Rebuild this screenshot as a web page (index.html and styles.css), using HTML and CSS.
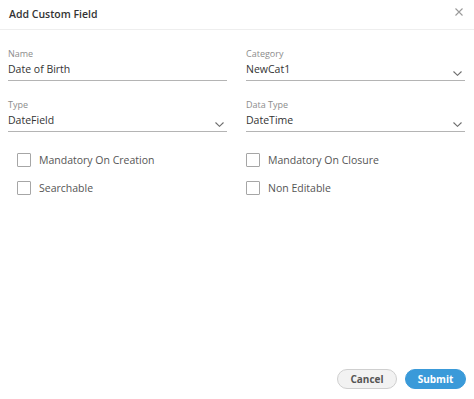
FILE: index.html
```html
<!DOCTYPE html>
<html>
<head>
<meta charset="utf-8">
<link rel="stylesheet" href="styles.css">
</head>
<body>
<div class="dialog">
  <div class="header">
    <div class="title">Add Custom Field</div>
    <svg class="close" width="8" height="8" viewBox="0 0 8 8"><path d="M0.5 0.5L7.5 7.5M7.5 0.5L0.5 7.5" stroke="#9a9a9a" stroke-width="1.1" fill="none"/></svg>
  </div>
  <div class="body">
    <div class="grid">
      <div class="field">
        <div class="label">Name</div>
        <div class="input"><span>Date of Birth</span></div>
      </div>
      <div class="field">
        <div class="label">Category</div>
        <div class="input"><span>NewCat1</span><svg class="chev" width="9" height="5" viewBox="0 0 9 5"><path d="M0.5 0.5L4.5 4.3L8.5 0.5" stroke="#6d6d6d" stroke-width="1.1" fill="none"/></svg></div>
      </div>
      <div class="field">
        <div class="label">Type</div>
        <div class="input"><span>DateField</span><svg class="chev" width="9" height="5" viewBox="0 0 9 5"><path d="M0.5 0.5L4.5 4.3L8.5 0.5" stroke="#6d6d6d" stroke-width="1.1" fill="none"/></svg></div>
      </div>
      <div class="field">
        <div class="label">Data Type</div>
        <div class="input"><span>DateTime</span><svg class="chev" width="9" height="5" viewBox="0 0 9 5"><path d="M0.5 0.5L4.5 4.3L8.5 0.5" stroke="#6d6d6d" stroke-width="1.1" fill="none"/></svg></div>
      </div>
    </div>
    <div class="checks">
      <label class="check"><span class="box"></span>Mandatory On Creation</label>
      <label class="check"><span class="box"></span>Mandatory On Closure</label>
      <label class="check"><span class="box"></span>Searchable</label>
      <label class="check"><span class="box"></span>Non Editable</label>
    </div>
  </div>
  <div class="footer">
    <button class="btn cancel">Cancel</button>
    <button class="btn submit">Submit</button>
  </div>
</div>
</body>
</html>
```
FILE: styles.css
```css
html, body {
  margin: 0;
  padding: 0;
  background: #ffffff;
}
body {
  font-family: "Open Sans", "Liberation Sans", sans-serif;
  color: #333333;
}
.dialog {
  width: 474px;
  height: 399px;
  display: flex;
  flex-direction: column;
  box-sizing: border-box;
}
.header {
  height: 30px;
  border-bottom: 1px solid #eeeeee;
  display: flex;
  align-items: center;
  justify-content: space-between;
  padding: 0 11px 2px 9px;
  box-sizing: border-box;
}
.title {
  font-size: 10.5px;
  font-weight: 600;
  color: #333333;
}
.close {
  display: block;
  margin-top: -4px;
}
.body {
  flex: 1;
  padding: 18px 9px 0 8px;
}
.grid {
  display: grid;
  grid-template-columns: 219px 219px;
  column-gap: 19px;
  row-gap: 18px;
}
.label {
  font-size: 9px;
  line-height: 11px;
  color: #8c8c8c;
}
.input {
  height: 22px;
  border-bottom: 1px solid #b4b4b4;
  display: flex;
  align-items: center;
  justify-content: space-between;
  font-size: 10.5px;
  color: #333333;
  box-sizing: border-box;
}
.input span {
  line-height: 15px;
}
.chev {
  display: block;
  margin-right: 3px;
  margin-top: 7px;
}
.checks {
  display: grid;
  grid-template-columns: 229px 200px;
  row-gap: 13px;
  margin-top: 20px;
  padding-left: 9px;
}
.check {
  display: flex;
  align-items: center;
  font-size: 10.5px;
  color: #555555;
  height: 15px;
}
.box {
  width: 12px;
  height: 12px;
  border: 1px solid #a6a6a6;
  border-radius: 1px;
  margin-right: 8px;
  flex: none;
}
.footer {
  display: flex;
  justify-content: flex-end;
  gap: 8px;
  padding: 0 8px 10px 0;
}
.btn {
  height: 20px;
  border-radius: 10px;
  font-family: "Open Sans", "Liberation Sans", sans-serif;
  font-size: 10px;
  font-weight: 700;
  padding: 0;
  cursor: pointer;
}
.cancel {
  width: 60px;
  background: #f2f2f2;
  border: 1px solid #cfcfcf;
  color: #555555;
}
.submit {
  width: 61px;
  background: #3a9ad9;
  border: 1px solid #3a9ad9;
  color: #ffffff;
}
```
